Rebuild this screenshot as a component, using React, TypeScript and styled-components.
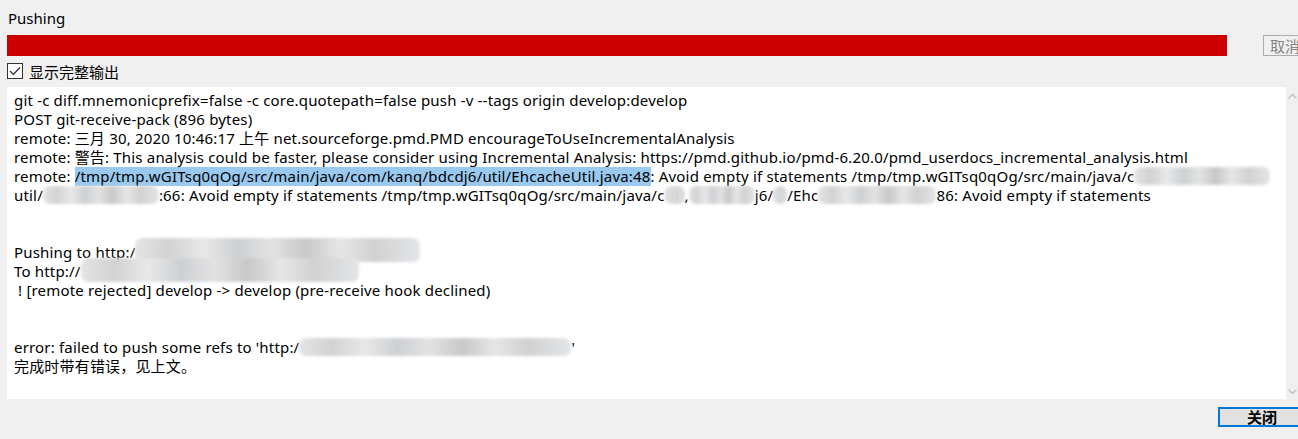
import React from "react";
import styled, { createGlobalStyle } from "styled-components";

const Global = createGlobalStyle`
  html, body { margin: 0; padding: 0; background: #f0f0f0; overflow: hidden; }
  body { font-family: "Noto Sans", "Noto Sans CJK SC", sans-serif; }
`;

const Window = styled.div`
  width: 1360px;
  height: 439px;
  box-sizing: border-box;
  padding: 8px 0 0 7px;
  display: flex;
  flex-direction: column;
  color: #000;
`;

const Title = styled.div`
  font-size: 15px;
  line-height: 20px;
  height: 20px;
  padding-left: 1px;
  margin-bottom: 7px;
`;

const ProgressRow = styled.div`
  display: flex;
  align-items: center;
  gap: 36px;
  height: 21px;
`;

const Bar = styled.div`
  width: 1220px;
  height: 21px;
  background: #cc0000;
`;

const Button = styled.button<{ $primary?: boolean; $disabled?: boolean; $w: number }>`
  width: ${(p) => p.$w}px;
  flex: none;
  height: ${(p) => (p.$primary ? 20 : 21)}px;
  box-sizing: border-box;
  padding: 0;
  font-family: "Noto Sans CJK SC", sans-serif;
  font-size: 15px;
  line-height: 16px;
  white-space: nowrap;
  font-weight: ${(p) => (p.$primary ? 700 : 400)};
  color: ${(p) => (p.$disabled ? "#838383" : "#000")};
  background: ${(p) => (p.$disabled ? "#f0f0f0" : "#e1e1e1")};
  border: 1px solid ${(p) => (p.$primary ? "#0078d7" : "#adadad")};
  ${(p) => (p.$primary ? "box-shadow: inset 0 0 0 1px #0078d7;" : "")}
`;

const CheckRow = styled.label`
  display: flex;
  align-items: center;
  gap: 6px;
  height: 18px;
  margin-top: 6px;
  font-family: "Noto Sans CJK SC", sans-serif;
  font-size: 15px;
`;

const Box = styled.span`
  width: 14px;
  height: 14px;
  border: 1px solid #333;
  background: #fff;
  display: flex;
  align-items: center;
  justify-content: center;
`;

const OutputFrame = styled.div`
  margin-top: 7px;
  display: flex;
  height: 312px;
`;

const Output = styled.div`
  width: 1279px;
  background: #fff;
  box-sizing: border-box;
  padding: 4px 0 0 7px;
  overflow: hidden;
`;

const Line = styled.div`
  font-size: 15px;
  line-height: 19px;
  height: 19px;
  letter-spacing: 0.18px;
  white-space: nowrap;
`;

const Sel = styled.span`
  background: #99c9ef;
  display: inline-block;
  line-height: 19px;
`;

const Blur = styled.span<{ $w: number; $h?: number; $dy?: number }>`
  display: inline-block;
  width: ${(p) => p.$w}px;
  height: ${(p) => p.$h ?? 18}px;
  vertical-align: middle;
  margin-top: ${(p) => p.$dy ?? -4}px;
  border-radius: 7px;
  filter: blur(1.6px);
  background:
    linear-gradient(90deg, #e4e4e4 0%, #d2d2d2 12%, #e8e8e8 24%, #cdd0d3 36%, #e2e2e2 48%, #c8c8c8 60%, #e6e6e6 72%, #d1d1d1 84%, #e2e5e8 100%);
`;

const ScrollBar = styled.div`
  width: 17px;
  background: #f0f0f0;
  display: flex;
  flex-direction: column;
  justify-content: space-between;
  align-items: center;
  padding: 6px 0 4px;
  box-sizing: border-box;
`;

const ButtonRow = styled.div`
  display: flex;
  justify-content: flex-end;
  padding-right: 54px;
  margin-top: 8px;
`;

const Chevron = ({ down }: { down?: boolean }) => (
  <svg width="9" height="6" viewBox="0 0 9 6" style={{ marginLeft: -4 }}>
    <path
      d={down ? "M0.5 0.5 L4.5 4.5 L8.5 0.5" : "M0.5 5.5 L4.5 1.5 L8.5 5.5"}
      fill="none"
      stroke="#c2c2c2"
      strokeWidth="1.3"
    />
  </svg>
);

export default function App() {
  return (
    <>
      <Global />
      <Window>
        <Title>Pushing</Title>
        <ProgressRow>
          <Bar />
          <Button $disabled $w={44}>取消</Button>
        </ProgressRow>
        <CheckRow>
          <Box>
            <svg width="12" height="10" viewBox="0 0 12 10">
              <path d="M1 5 L4.3 8.3 L11 1.5" fill="none" stroke="#222" strokeWidth="1.2" />
            </svg>
          </Box>
          显示完整输出
        </CheckRow>
        <OutputFrame>
          <Output>
            <Line>git -c diff.mnemonicprefix=false -c core.quotepath=false push -v --tags origin develop:develop</Line>
            <Line>POST git-receive-pack (896 bytes)</Line>
            <Line>remote: 三月 30, 2020 10:46:17 上午 net.sourceforge.pmd.PMD encourageToUseIncrementalAnalysis</Line>
            <Line>remote: 警告: This analysis could be faster, please consider using Incremental Analysis: https://pmd.github.io/pmd-6.20.0/pmd_userdocs_incremental_analysis.html</Line>
            <Line>
              remote: <Sel>/tmp/tmp.wGITsq0qOg/src/main/java/com/kanq/bdcdj6/util/EhcacheUtil.java:48</Sel>: Avoid empty if statements /tmp/tmp.wGITsq0qOg/src/main/java/c<Blur $w={136} />
            </Line>
            <Line>
              util/<Blur $w={116} />:66: Avoid empty if statements /tmp/tmp.wGITsq0qOg/src/main/java/c<Blur $w={20} />,<Blur $w={66} />j6/<Blur $w={14} />/Ehc<Blur $w={118} />86: Avoid empty if statements
            </Line>
            <Line />
            <Line />
            <Line>
              Pushing to http:/<Blur $w={285} $h={24} $dy={-8} />
            </Line>
            <Line>
              To http://<Blur $w={278} $h={24} $dy={-6} />
            </Line>
            <Line>&nbsp;! [remote rejected] develop -&gt; develop (pre-receive hook declined)</Line>
            <Line />
            <Line />
            <Line>
              error: failed to push some refs to 'http:/<Blur $w={272} />'
            </Line>
            <Line>完成时带有错误，见上文。</Line>
          </Output>
          <ScrollBar>
            <Chevron />
            <Chevron down />
          </ScrollBar>
        </OutputFrame>
        <ButtonRow>
          <Button $primary $w={88}>关闭</Button>
        </ButtonRow>
      </Window>
    </>
  );
}
